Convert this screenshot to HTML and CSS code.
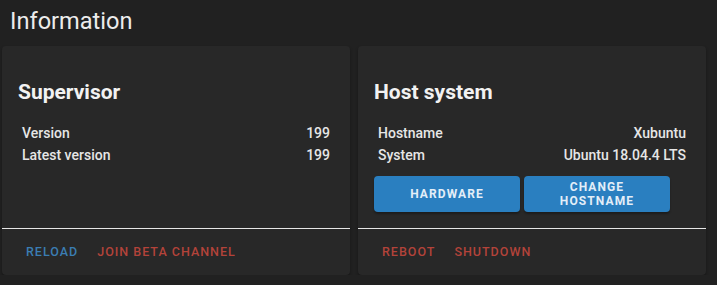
FILE: index.html
```html
<!DOCTYPE html>
<html>
<head>
<meta charset="utf-8">
<link rel="stylesheet" href="styles.css">
</head>
<body>
<h1 class="page-title">Information</h1>
<div class="cards">
  <div class="card">
    <div class="card-body">
      <h2 class="card-title">Supervisor</h2>
      <table class="info">
        <tr><td>Version</td><td class="val">199</td></tr>
        <tr><td>Latest version</td><td class="val">199</td></tr>
      </table>
    </div>
    <div class="card-actions">
      <span class="action blue">Reload</span>
      <span class="action red">Join beta channel</span>
    </div>
  </div>
  <div class="card">
    <div class="card-body">
      <h2 class="card-title">Host system</h2>
      <table class="info">
        <tr><td>Hostname</td><td class="val">Xubuntu</td></tr>
        <tr><td>System</td><td class="val">Ubuntu 18.04.4 LTS</td></tr>
      </table>
      <div class="buttons">
        <span class="btn">Hardware</span>
        <span class="btn">Change<br>hostname</span>
      </div>
    </div>
    <div class="card-actions">
      <span class="action red">Reboot</span>
      <span class="action red">Shutdown</span>
    </div>
  </div>
</div>
</body>
</html>
```
FILE: styles.css
```css
html, body {
  margin: 0;
  padding: 0;
  background: #212121;
  color: #e1e1e1;
  font-family: Roboto, "Liberation Sans", sans-serif;
}
.page-title {
  margin: 0;
  padding: 0 0 0 10px;
  height: 46px;
  font-size: 23.6px;
  font-weight: 400;
  line-height: 42px;
  color: #ececec;
}
.cards {
  display: grid;
  grid-template-columns: 348px 348px;
  column-gap: 8px;
  padding-left: 2px;
}
.card {
  background: #282828;
  border-radius: 4px;
  box-shadow: 0 2px 3px rgba(0,0,0,0.35);
  display: flex;
  flex-direction: column;
}
.card-body {
  flex: 1;
  padding: 32px 16px 16px 16px;
}
.card-title {
  margin: 0 0 16px 0;
  font-size: 21px;
  line-height: 28px;
  font-weight: 700;
  color: #f2f2f2;
}
.info {
  width: 100%;
  border-collapse: collapse;
  font-size: 14px;
  line-height: 22px;
  font-weight: 500;
  color: #e6e6e6;
}
.info td {
  padding: 0 4px;
}
.info .val {
  text-align: right;
}
.buttons {
  display: flex;
  gap: 4px;
  margin-top: 10px;
}
.btn {
  width: 146px;
  height: 36px;
  background: #2a7fc0;
  border-radius: 4px;
  box-shadow: 0 2px 2px rgba(0,0,0,0.3);
  display: flex;
  align-items: center;
  justify-content: center;
  text-align: center;
  text-transform: uppercase;
  font-size: 12px;
  font-weight: 700;
  letter-spacing: 1.1px;
  line-height: 14.5px;
  color: #e3eef8;
}
.card-actions {
  border-top: 1px solid #e6e6e6;
  padding: 5px 16px;
  display: flex;
  gap: 3px;
}
.action {
  padding: 0 8px;
  line-height: 36px;
  font-size: 12.5px;
  font-weight: 500;
  letter-spacing: 1px;
  text-transform: uppercase;
}
.blue { color: #3b7db3; }
.red { color: #b3433a; }
```
